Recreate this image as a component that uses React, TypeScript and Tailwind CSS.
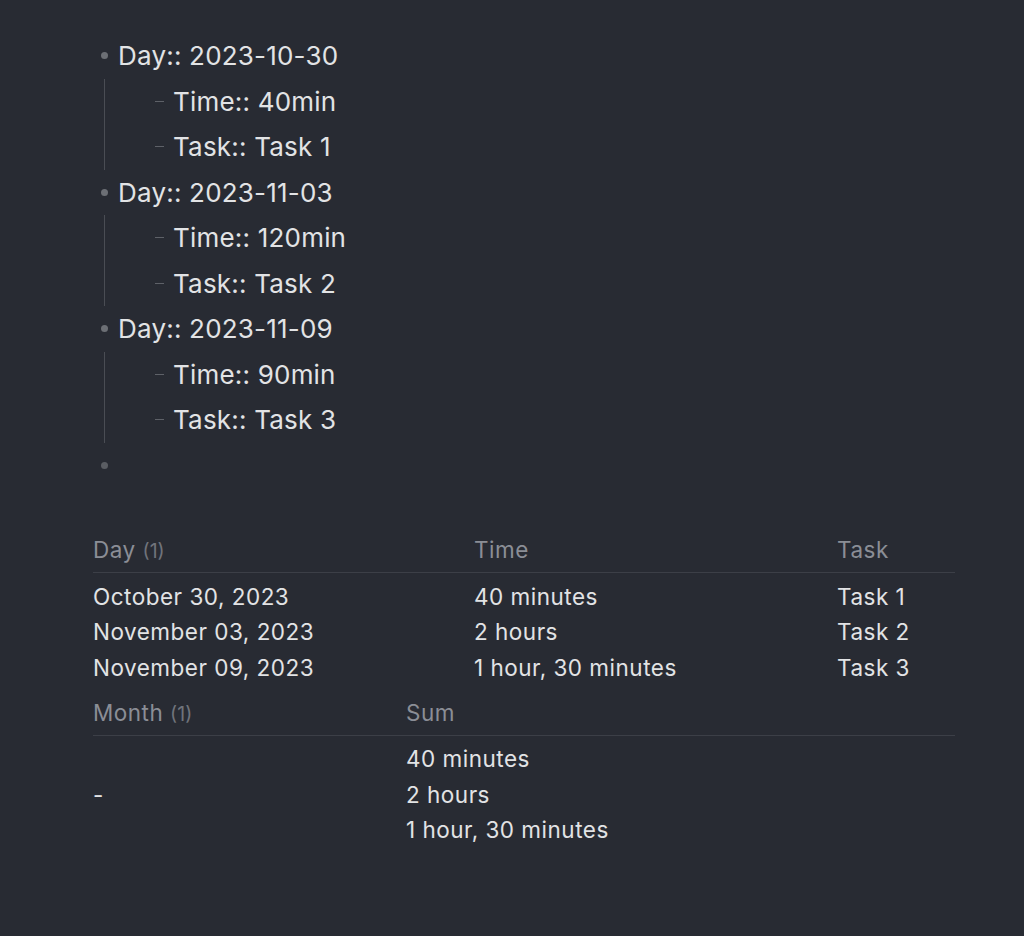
import React from "react";

const days = [
  { day: "2023-10-30", time: "40min", task: "Task 1" },
  { day: "2023-11-03", time: "120min", task: "Task 2" },
  { day: "2023-11-09", time: "90min", task: "Task 3" },
];

export default function App() {
  return (
    <div
      className="min-h-[936px] w-full bg-[#282b33] text-[#e2e3e5] pt-[33px]"
      style={{ fontFamily: "Inter, 'Noto Sans', sans-serif" }}
    >
      <div className="pl-[90px] text-[26px] leading-[45.5px] tracking-[0.2px]">
        {days.map((d) => (
          <div key={d.day}>
            <div className="flex items-center">
              <span className="w-[28px] flex items-center">
                <span className="block w-[7px] h-[7px] rounded-full bg-[#6c6f75] ml-[11px]" />
              </span>
              <span>Day:: {d.day}</span>
            </div>
            <div className="ml-[14px] border-l border-[#4a4d54] pl-[50px]">
              <div className="flex items-center">
                <span className="w-[18px] flex items-center">
                  <span className="block w-[9px] h-px bg-[#5e6168]" />
                </span>
                <span>Time:: {d.time}</span>
              </div>
              <div className="flex items-center">
                <span className="w-[18px] flex items-center">
                  <span className="block w-[9px] h-px bg-[#5e6168]" />
                </span>
                <span>Task:: {d.task}</span>
              </div>
            </div>
          </div>
        ))}
        <div className="flex items-center h-[45.5px]">
          <span className="w-[28px] flex items-center">
            <span className="block w-[7px] h-[7px] rounded-full bg-[#5a5d63] ml-[11px]" />
          </span>
        </div>
      </div>

      <div className="ml-[93px] mr-[69px] mt-[42px] text-[22.5px] tracking-[0.5px]">
        <div className="grid grid-cols-[381px_363px_1fr] h-[43px] items-center border-b border-[#3c3f47] text-[#8b8e96] pb-[2px]">
          <div>
            Day <span className="text-[19.5px] tracking-normal text-[#70737b]">(1)</span>
          </div>
          <div>Time</div>
          <div>Task</div>
        </div>
        <div className="pt-[6px]">
          {[
            ["October 30, 2023", "40 minutes", "Task 1"],
            ["November 03, 2023", "2 hours", "Task 2"],
            ["November 09, 2023", "1 hour, 30 minutes", "Task 3"],
          ].map((r) => (
            <div
              key={r[0]}
              className="grid grid-cols-[381px_363px_1fr] h-[35.5px] items-center"
            >
              <div>{r[0]}</div>
              <div>{r[1]}</div>
              <div>{r[2]}</div>
            </div>
          ))}
        </div>

        <div className="mt-[7px] grid grid-cols-[313px_1fr] h-[43px] items-center border-b border-[#3c3f47] text-[#8b8e96] pb-[2px]">
          <div>
            Month <span className="text-[19.5px] tracking-normal text-[#70737b]">(1)</span>
          </div>
          <div>Sum</div>
        </div>
        <div className="pt-[6px] grid grid-cols-[313px_1fr] items-center">
          <div>-</div>
          <div>
            <div className="h-[35.5px] flex items-center">40 minutes</div>
            <div className="h-[35.5px] flex items-center">2 hours</div>
            <div className="h-[35.5px] flex items-center">1 hour, 30 minutes</div>
          </div>
        </div>
      </div>
    </div>
  );
}
